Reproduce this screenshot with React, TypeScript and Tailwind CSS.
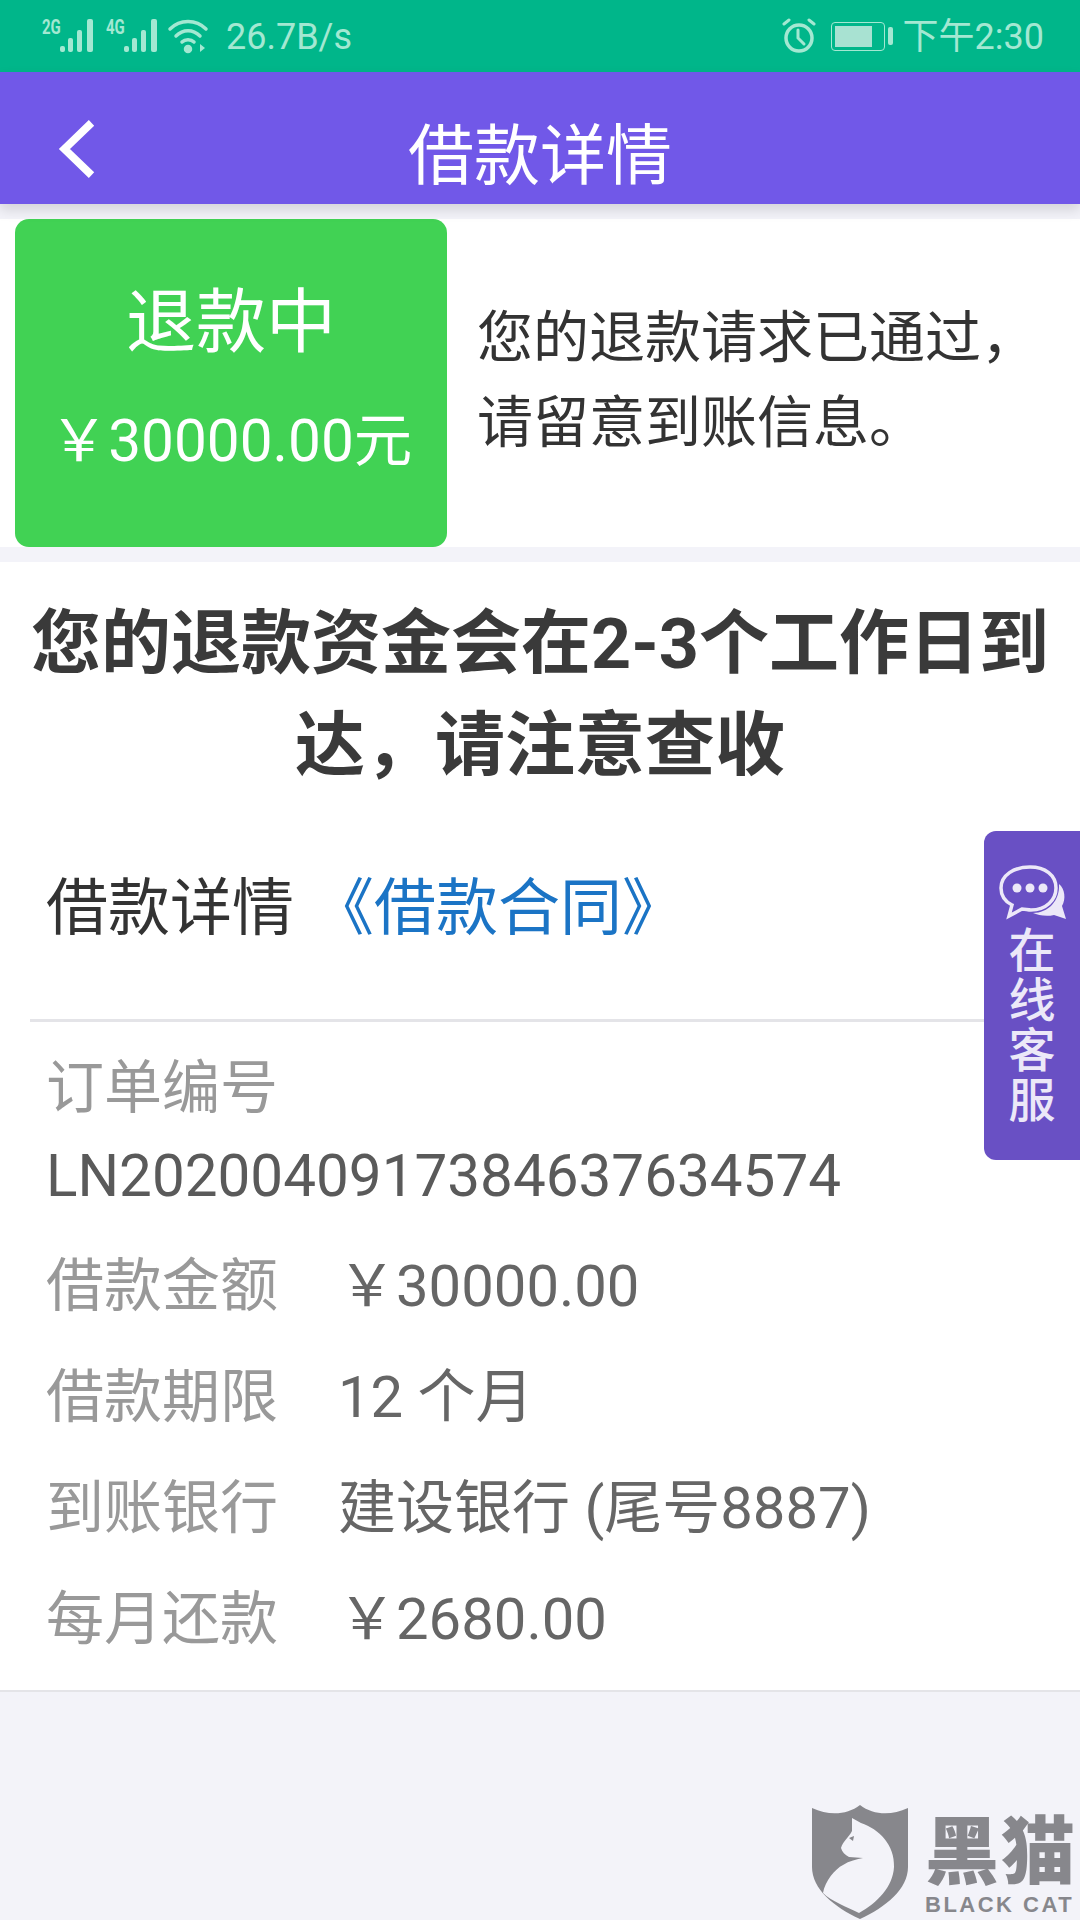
const detailRows = [
  { label: "借款金额", value: "￥30000.00" },
  { label: "借款期限", value: "12 个月" },
  { label: "到账银行", value: "建设银行 (尾号8887)" },
  { label: "每月还款", value: "￥2680.00" },
]

function SignalBars({ tag }: { tag: string }) {
  return (
    <div className="flex items-start">
      <span className="w-[18px] text-[20px] leading-[17px] font-bold scale-x-75 origin-left whitespace-nowrap">{tag}</span>
      <svg width="35" height="34" viewBox="0 0 35 34" fill="currentColor">
        <rect x="0" y="27" width="5" height="6" rx="2" />
        <rect x="8" y="19" width="5" height="14" rx="2" />
        <rect x="17" y="11" width="5" height="22" rx="2" />
        <rect x="27" y="0" width="6" height="33" rx="2" />
      </svg>
    </div>
  )
}

function StatusBar() {
  return (
    <div className="h-[72px] shrink-0 bg-[#00b68a] text-[#a3e8d2] flex items-center justify-between pl-[42px] pr-[36px]">
      <div className="flex items-center">
        <SignalBars tag="2G" />
        <div className="w-[11px]" />
        <SignalBars tag="4G" />
        <svg className="ml-[8px]" width="42" height="36" viewBox="0 0 42 34" fill="none" stroke="currentColor" strokeWidth="3.5" strokeLinecap="round">
          <path d="M3 10 C13 0 29 0 39 10" />
          <path d="M9 17 C16 10 26 10 33 17" />
          <path d="M15 23 C18 20 24 20 27 23" />
          <circle cx="21" cy="30" r="2.5" fill="currentColor" />
          <path d="M33 25 L33 33 L38 29 Z" fill="currentColor" stroke="none" />
        </svg>
        <span className="ml-[17px] text-[36px] leading-none mt-[2px]">26.7B/s</span>
      </div>
      <div className="flex items-center">
        <svg width="36" height="36" viewBox="0 0 36 36" fill="none" stroke="currentColor" strokeWidth="3.5" strokeLinecap="round">
          <circle cx="18" cy="20" r="13" />
          <path d="M17 12 V20 L23 26" strokeWidth="3" />
          <path d="M3 6 L8 2 M33 6 L28 2" strokeWidth="3" />
        </svg>
        <div className="ml-[14px] w-[54px] h-[29px] rounded-[4px] border-[1.5px] border-[#a3e8d2] p-[3px] flex">
          <div className="w-[37px] bg-[#a8e2d2]" />
        </div>
        <div className="ml-[3px] w-[5px] h-[18px] rounded-[2px] bg-[#a3e8d2]" />
        <span className="ml-[10px] text-[36px] leading-none mt-[2px]">下午2:30</span>
      </div>
    </div>
  )
}

function NavBar() {
  return (
    <div className="relative z-10 h-[132px] shrink-0 bg-[#7158e8] shadow-[0_6px_12px_rgba(0,0,0,0.13)] flex items-center justify-center">
      <svg className="absolute left-[57px] top-[47px]" width="40" height="60" viewBox="0 0 40 62" fill="none" stroke="#ffffff" strokeWidth="8">
        <path d="M35 4 L7 31 L35 58" />
      </svg>
      <span className="text-white text-[66px] leading-none mt-[37px]">借款详情</span>
    </div>
  )
}

function SupportTab() {
  return (
    <div className="absolute right-0 top-[831px] w-[96px] h-[329px] bg-[#6950c4] rounded-l-[12px] flex flex-col items-center text-[#ece8f8] pt-[33px]">
      <svg className="ml-[2px]" width="70" height="62" viewBox="0 0 70 60" fill="none">
        <path d="M32 2 C16 2 3 10 3 23 C3 31 8 37 14 40 L11 51 L24 44 C27 44 30 45 33 45 C48 45 58 35 58 23 C58 10 47 2 32 2 Z" stroke="currentColor" strokeWidth="3.5" />
        <circle cx="19" cy="23" r="4.5" fill="currentColor" />
        <circle cx="32" cy="23" r="4.5" fill="currentColor" />
        <circle cx="45" cy="23" r="4.5" fill="currentColor" />
        <path d="M61 19 C67 24 68 34 64 41 L68 54 L56 50 C48 52 40 50 35 48 C50 48 62 36 61 19 Z" fill="currentColor" />
      </svg>
      <div className="text-[47px] leading-[50px] font-medium w-[47px] text-center">在线客服</div>
    </div>
  )
}

function Watermark() {
  return (
    <div className="absolute left-[811px] top-[1805px] flex text-[#87878c]">
      <svg width="98" height="115" viewBox="0 0 98 115" fill="none">
        <path d="M1 3 C18 11 36 10 49 0 C62 10 80 11 97 3 V62 C97 84 75 102 49 114 C23 102 1 84 1 62 Z" fill="currentColor" />
        <path d="M41 13 L50 18 C68 24 84 40 83 62 C82 82 66 98 48 108 C36 102 20 96 12 88 C14 76 24 64 32 60 C38 56 46 54 52 53 L38 52 C34 50 31 47 30 43 C32 36 38 32 41 26 Z" fill="#f3f3f9" />
        <path d="M38 33 L43 31 L42 36 Z" fill="currentColor" />
      </svg>
      <div className="ml-[16px] flex flex-col items-start">
        <span className="text-[74px] leading-[80px] font-black mt-[8px] tracking-[2px] whitespace-nowrap">黑猫</span>
        <span className="text-[22px] leading-[24px] font-black tracking-[2.5px] whitespace-nowrap" style={{ fontFamily: "'Liberation Sans', sans-serif" }}>BLACK CAT</span>
      </div>
    </div>
  )
}

export default function App() {
  return (
    <div
      className="relative w-[1080px] h-[1920px] overflow-hidden bg-[#f3f3f9] flex flex-col"
      style={{ fontFamily: "Roboto, 'Noto Sans CJK SC', sans-serif" }}
    >
      <StatusBar />
      <NavBar />

      {/* Refund status */}
      <div className="mt-[15px] h-[328px] shrink-0 flex bg-white">
        <div className="ml-[15px] w-[432px] bg-[#41d254] rounded-[14px] flex flex-col items-center text-white">
          <span className="mt-[69px] text-[70px] leading-none">退款中</span>
          <span className="mt-[54px] text-[58.5px] leading-none whitespace-nowrap">￥30000.00元</span>
        </div>
        <div className="pl-[30px] pt-[77px] text-[#333333] text-[56px] leading-[85px] whitespace-nowrap">
          <div>您的退款请求已通过，</div>
          <div>请留意到账信息。</div>
        </div>
      </div>

      {/* Details */}
      <div className="mt-[15px] h-[1130px] shrink-0 bg-white border-b-2 border-[#e4e4e8]">
        <div className="pt-[31px] px-[20px] text-center text-[#3a3a3a] text-[70px] leading-[102px] font-bold">
          您的退款资金会在2-3个工作日到达，请注意查收
        </div>
        <div className="mt-[81px] pl-[46px] flex items-center text-[62px] leading-none text-[#333333]">
          <span>借款详情</span>
          <span className="ml-[18px] text-[#1b74c5]">《借款合同》</span>
        </div>
        <div className="mt-[79px] mx-[30px] h-[3px] bg-[#e4e4e8]" />
        <div className="pl-[46px] pt-[34px] text-[58px] leading-[64px] text-[#666666]">
          <div className="text-[#999999]">订单编号</div>
          <div className="mt-[24px] text-[58.4px] text-[#5a5a5a]">LN2020040917384637634574</div>
          <div className="mt-[46px] flex flex-col gap-[47px]">
            {detailRows.map((row) => (
              <div key={row.label} className="flex">
                <span className="w-[292px] text-[#999999]">{row.label}</span>
                <span>{row.value}</span>
              </div>
            ))}
          </div>
        </div>
      </div>

      <SupportTab />
      <Watermark />
    </div>
  )
}
